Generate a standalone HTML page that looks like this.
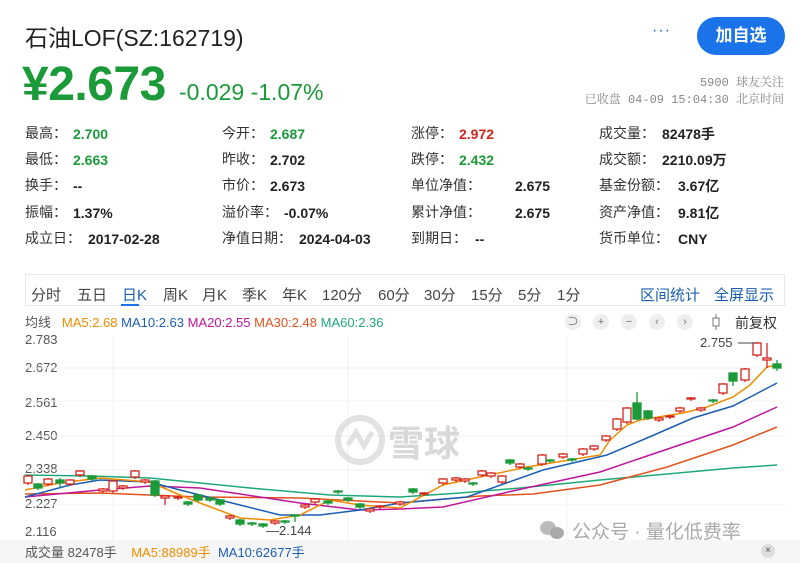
<!DOCTYPE html>
<html><head><meta charset="utf-8"><style>
*{margin:0;padding:0;box-sizing:border-box}
body{width:800px;height:563px;background:#fff;font-family:"Liberation Sans","Noto Sans CJK SC",sans-serif;color:#333;position:relative;overflow:hidden}
.a{position:absolute;white-space:nowrap}
.g{color:#1a9a38}.r{color:#d4251c}
.row span{position:absolute;font-size:14px;line-height:18px;height:18px}
.lb{color:#333}.v{font-weight:bold;color:#222;top:1px}
.tab{position:absolute;top:284px;font-size:15px;color:#444}
.ic{position:absolute;top:314px;width:16px;height:16px;border-radius:50%;background:#eee;color:#777;font-size:11px;text-align:center;line-height:16px}
.yl{position:absolute;left:25px;font-size:13px;color:#555}
</style></head><body>
<div class="a" style="left:25px;top:19px;font-size:23px;color:#222">石油LOF(SZ:162719)</div>
<div class="a g" style="left:22px;top:57px;font-size:48px;font-weight:bold;letter-spacing:-0.5px">¥2.673</div>
<div class="a g" style="left:179px;top:79px;font-size:23px">-0.029 -1.07%</div>
<div class="a" style="left:652px;top:22px;font-size:16px;color:#1a6fd0;letter-spacing:1px">···</div>
<div class="a" style="left:697px;top:17px;width:88px;height:38px;border-radius:19px;background:#1a73e8;color:#fff;font-size:17px;font-weight:bold;text-align:center;line-height:38px">加自选</div>
<div class="a" style="right:16px;top:75px;font-size:12px;color:#888;font-family:'Liberation Mono','Noto Serif CJK SC',monospace;text-align:right;line-height:17px">5900 球友关注<br>已收盘 04-09 15:04:30 北京时间</div>

<div class="row">
<span class="lb" style="left:25px;top:124px">最高：</span><span class="v" style="left:73px;margin-top:124px;color:#1a9a38">2.700</span>
<span class="lb" style="left:222px;top:124px">今开：</span><span class="v" style="left:270px;margin-top:124px;color:#1a9a38">2.687</span>
<span class="lb" style="left:411px;top:124px">涨停：</span><span class="v" style="left:459px;margin-top:124px;color:#d4251c">2.972</span>
<span class="lb" style="left:599px;top:124px">成交量：</span><span class="v" style="left:662px;margin-top:124px">82478手</span>

<span class="lb" style="left:25px;top:150px">最低：</span><span class="v" style="left:73px;margin-top:150px;color:#1a9a38">2.663</span>
<span class="lb" style="left:222px;top:150px">昨收：</span><span class="v" style="left:270px;margin-top:150px">2.702</span>
<span class="lb" style="left:411px;top:150px">跌停：</span><span class="v" style="left:459px;margin-top:150px;color:#1a9a38">2.432</span>
<span class="lb" style="left:599px;top:150px">成交额：</span><span class="v" style="left:662px;margin-top:150px">2210.09万</span>

<span class="lb" style="left:25px;top:176px">换手：</span><span class="v" style="left:73px;margin-top:176px">--</span>
<span class="lb" style="left:222px;top:176px">市价：</span><span class="v" style="left:270px;margin-top:176px">2.673</span>
<span class="lb" style="left:411px;top:176px">单位净值：</span><span class="v" style="left:515px;margin-top:176px">2.675</span>
<span class="lb" style="left:599px;top:176px">基金份额：</span><span class="v" style="left:678px;margin-top:176px">3.67亿</span>

<span class="lb" style="left:25px;top:203px">振幅：</span><span class="v" style="left:73px;margin-top:203px">1.37%</span>
<span class="lb" style="left:222px;top:203px">溢价率：</span><span class="v" style="left:284px;margin-top:203px">-0.07%</span>
<span class="lb" style="left:411px;top:203px">累计净值：</span><span class="v" style="left:515px;margin-top:203px">2.675</span>
<span class="lb" style="left:599px;top:203px">资产净值：</span><span class="v" style="left:678px;margin-top:203px">9.81亿</span>

<span class="lb" style="left:25px;top:229px">成立日：</span><span class="v" style="left:88px;margin-top:229px">2017-02-28</span>
<span class="lb" style="left:222px;top:229px">净值日期：</span><span class="v" style="left:299px;margin-top:229px">2024-04-03</span>
<span class="lb" style="left:411px;top:229px">到期日：</span><span class="v" style="left:475px;margin-top:229px">--</span>
<span class="lb" style="left:599px;top:229px">货币单位：</span><span class="v" style="left:678px;margin-top:229px">CNY</span>
</div>

<div class="a" style="left:25px;top:274px;width:760px;height:32px;border:1px solid #e8e8e8"></div>
<span class="tab" style="left:31px">分时</span><span class="tab" style="left:77px">五日</span>
<span class="tab" style="left:122px;color:#1a5fb4">日K</span>
<div class="a" style="left:121px;top:304px;width:18px;height:2px;background:#1a73e8"></div>
<span class="tab" style="left:163px">周K</span><span class="tab" style="left:202px">月K</span><span class="tab" style="left:242px">季K</span><span class="tab" style="left:282px">年K</span><span class="tab" style="left:322px">120分</span><span class="tab" style="left:378px">60分</span><span class="tab" style="left:424px">30分</span><span class="tab" style="left:471px">15分</span><span class="tab" style="left:518px">5分</span><span class="tab" style="left:557px">1分</span>
<span class="tab" style="left:640px;color:#1a5fb4">区间统计</span><span class="tab" style="left:714px;color:#1a5fb4">全屏显示</span>

<div class="a" style="left:25px;top:312px;font-size:13px"><span style="color:#555">均线</span>&nbsp;&nbsp;&nbsp;<span style="color:#f08c00">MA5:2.68</span> <span style="color:#1a5fb4">MA10:2.63</span> <span style="color:#c0169c">MA20:2.55</span> <span style="color:#e2531e">MA30:2.48</span> <span style="color:#1fa97a">MA60:2.36</span></div>
<span class="ic" style="left:565px">⊃</span><span class="ic" style="left:593px">+</span><span class="ic" style="left:621px">−</span><span class="ic" style="left:649px">‹</span><span class="ic" style="left:677px">›</span>
<svg class="a" style="left:710px;top:314px" width="12" height="16"><line x1="6" y1="0" x2="6" y2="16" stroke="#777"/><rect x="3" y="4" width="6" height="8" fill="#fff" stroke="#777"/></svg>
<div class="a" style="left:735px;top:313px;font-size:14px;color:#333">前复权</div>

<span class="yl" style="top:332px">2.783</span><span class="yl" style="top:360px">2.672</span><span class="yl" style="top:395px">2.561</span><span class="yl" style="top:428px">2.450</span><span class="yl" style="top:461px">2.338</span><span class="yl" style="top:496px">2.227</span><span class="yl" style="top:524px">2.116</span>

<svg class="a" style="left:0;top:0" width="800" height="563">
<g stroke="#f0f0f0" stroke-width="1">
<line x1="25" y1="368" x2="785" y2="368"/><line x1="25" y1="401" x2="785" y2="401"/><line x1="25" y1="436" x2="785" y2="436"/><line x1="25" y1="470" x2="785" y2="470"/><line x1="25" y1="505" x2="785" y2="505"/>
<line x1="113" y1="336" x2="113" y2="540"/><line x1="348" y1="336" x2="348" y2="540"/><line x1="567" y1="336" x2="567" y2="540"/>
</g>
<g opacity="0.55">
<circle cx="360" cy="440" r="22" fill="none" stroke="#ccc" stroke-width="6"/>
<path d="M348 445 L356 432 L364 446 L372 432" fill="none" stroke="#ccc" stroke-width="5"/>
<text x="388" y="456" font-size="36" fill="#bbb" font-family="Noto Sans CJK SC,sans-serif" font-weight="bold">雪球</text>
</g>
<g fill="none" stroke-width="1.5">
<polyline stroke="#1fa97a" points="25,475 90,476 150,478 250,488 330,495 400,497 460,493 520,488 600,480 667,474 733,468 777,465"/>
<polyline stroke="#e2531e" points="25,494 100,493 200,497 300,498 400,503 480,496 533,494 600,485 667,467 733,445 777,427"/>
<polyline stroke="#c0169c" points="25,497 100,490 150,486 200,488 300,503 360,510 400,509 443,507 517,490 600,472 650,455 733,427 777,407"/>
<polyline stroke="#1a5fb4" points="25,497 70,485 100,480 150,482 180,490 240,505 280,515 320,515 360,510 400,503 467,497 543,470 607,455 647,438 693,418 733,406 777,383"/>
<polyline stroke="#f08c00" points="25,490 60,483 100,478 150,482 180,495 200,503 240,518 270,520 300,515 330,500 360,505 400,508 443,485 480,477 527,467 600,455 610,440 627,425 640,420 683,413 707,407 733,397 750,385 767,367 777,365"/>
</g>
<g id="c" stroke-width="1.3"></g>
<text x="700" y="347" font-size="13" fill="#444">2.755</text><line x1="738" y1="343" x2="755" y2="343" stroke="#444"/>
<text x="266" y="535" font-size="13" fill="#444">—2.144</text>
<g fill="#bbb"><ellipse cx="548" cy="528" rx="8" ry="7"/><ellipse cx="557" cy="533" rx="7" ry="6" fill="#aaa"/></g>
</svg>
<div class="a" style="left:572px;top:517px;font-size:19px;color:#aaa">公众号 · 量化低费率</div>
<div class="a" style="left:0;top:540px;width:800px;height:23px;background:#f6f6f6"></div>
<div class="a" style="left:25px;top:542px;font-size:13px"><span style="color:#555">成交量 82478手</span>&nbsp;&nbsp;&nbsp;&nbsp;<span style="color:#f08c00">MA5:88989手</span>&nbsp;&nbsp;<span style="color:#1a5fb4">MA10:62677手</span></div>
<div class="a" style="left:761px;top:544px;width:14px;height:14px;border-radius:50%;background:#ddd;font-size:10px;text-align:center;line-height:14px;color:#555">×</div>
<script>
var d=[[28,'r',476,483],[38,'g',484,488],[48,'r',479,484],[60,'g',480,483,478,488],[70,'r',480,484],[80,'r',471,475],[92,'g',476,479],[103,'r',489,491],[113,'r',481,491],[123,'r',486,488],[135,'r',471,477],[145,'r',480,482],[155,'g',481,495],[165,'r',496,498,495,505],[178,'r',497,498],[188,'g',502,504],[198,'g',495,500],[210,'g',498,500],[220,'g',500,504],[230,'r',516,518],[240,'g',520,524],[252,'g',523,524],[263,'g',524,526],[275,'r',521,523],[285,'g',521,522],[295,'g',515,516,515,522],[305,'r',505,507],[315,'r',499,502],[328,'g',501,503],[338,'g',491,492],[348,'g',498,500],[360,'g',504,507],[370,'r',509,511],[380,'r',506,507],[400,'r',502,504],[413,'g',489,492],[424,'r',493,494],[443,'r',479,483],[456,'r',478,480],[465,'r',479,481],[473,'g',483,484],[482,'r',471,475],[491,'r',473,476],[502,'r',476,482],[510,'g',460,463],[520,'r',464,467],[528,'g',468,469],[542,'r',455,464],[550,'g',460,461],[563,'r',454,457],[572,'g',459,460],[583,'r',449,454],[594,'r',446,449],[606,'r',436,440],[617,'r',419,429],[627,'r',408,422],[637,'g',403,419,392,420],[648,'g',411,418],[659,'r',418,420],[670,'r',416,417],[680,'r',408,411],[691,'r',398,399],[701,'r',408,410],[713,'g',400,401],[723,'r',384,393],[733,'g',373,381,373,386],[745,'r',369,380],[757,'r',343,355],[767,'r',358,360,343,368],[777,'g',364,368,360,371]];
var s='';d.forEach(function(c){var col=c[1]=='r'?'#d4251c':'#1a9a38';var h=c[4]||c[2]-1,l=c[5]||c[3]+2;s+='<line x1="'+c[0]+'" x2="'+c[0]+'" y1="'+h+'" y2="'+l+'" stroke="'+col+'"/>';s+='<rect x="'+(c[0]-4)+'" y="'+c[2]+'" width="8" height="'+Math.max(1,c[3]-c[2])+'" fill="'+(c[1]=='r'?'#fff':col)+'" stroke="'+col+'"/>';});
document.getElementById('c').innerHTML=s;
</script>
</body></html>
